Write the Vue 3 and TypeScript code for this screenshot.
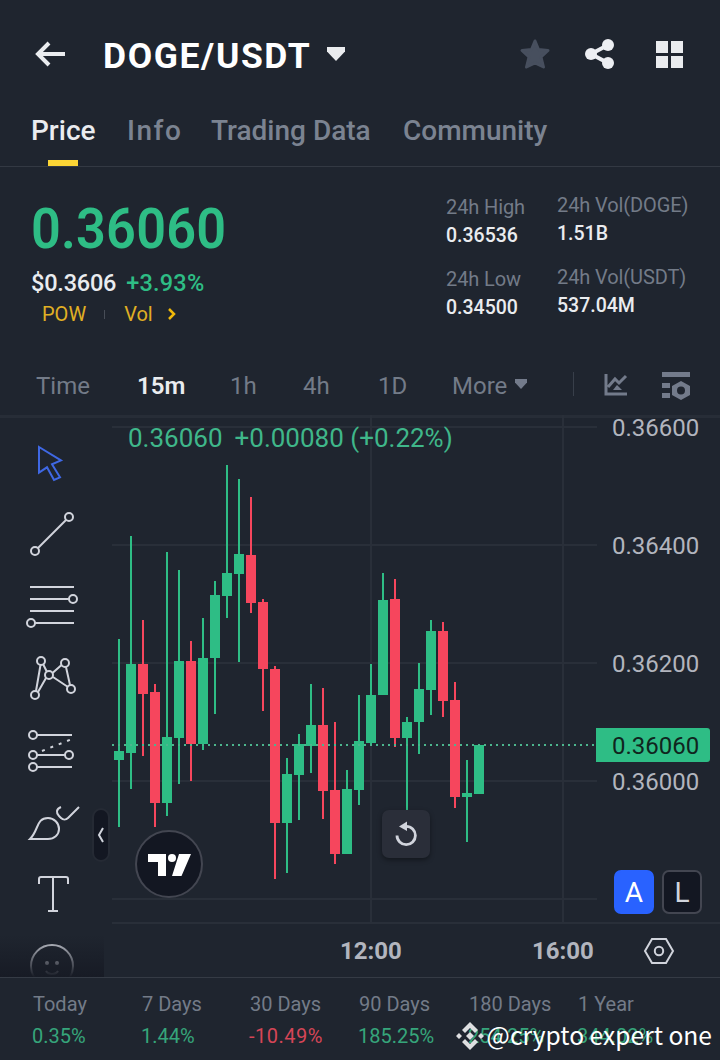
<script setup lang="ts">
import { ref } from 'vue'

interface Candle { up: boolean; high: number; top: number; bottom: number; low: number }
interface Change { label: string; value: string; down?: boolean }

const tabs = ['Price', 'Info', 'Trading Data', 'Community']
const activeTab = ref('Price')
const frames = ['Time', '15m', '1h', '4h', '1D']
const activeFrame = ref('15m')

const stats = [
  [{ label: '24h High', value: '0.36536' }, { label: '24h Low', value: '0.34500' }],
  [{ label: '24h Vol(DOGE)', value: '1.51B' }, { label: '24h Vol(USDT)', value: '537.04M' }],
]

const changes: Change[] = [
  { label: 'Today', value: '0.35%' },
  { label: '7 Days', value: '1.44%' },
  { label: '30 Days', value: '-10.49%', down: true },
  { label: '90 Days', value: '185.25%' },
  { label: '180 Days', value: '254.25%' },
  { label: '1 Year', value: '344.02%' },
]

const gridRows = [427, 545, 663, 781, 899]
const gridCols = [371, 563]
const c = (up: number, high: number, top: number, bottom: number, low: number): Candle =>
  ({ up: up === 1, high, top, bottom, low })

// Vertical extents of each 15-minute candle in chart units.
const candles: Candle[] = [
  c(1, 639, 751, 760, 827), c(1, 536, 664, 753, 789), c(0, 620, 664, 694, 756),
  c(0, 684, 692, 803, 827), c(1, 552, 737, 803, 816), c(1, 570, 661, 738, 784),
  c(0, 641, 661, 744, 781), c(1, 618, 658, 744, 750), c(1, 581, 595, 658, 714),
  c(1, 465, 573, 596, 618), c(1, 479, 554, 574, 662), c(0, 497, 555, 603, 613),
  c(0, 599, 602, 669, 711), c(0, 666, 669, 823, 879), c(1, 758, 774, 823, 873),
  c(1, 734, 744, 775, 820), c(1, 684, 725, 746, 773), c(0, 688, 725, 791, 819),
  c(0, 722, 790, 854, 864), c(1, 770, 789, 854, 854), c(1, 695, 741, 790, 805),
  c(1, 664, 695, 743, 745), c(1, 573, 600, 695, 695), c(0, 579, 599, 738, 747),
  c(1, 717, 722, 738, 811), c(1, 663, 689, 722, 754), c(1, 620, 631, 690, 715),
  c(0, 622, 631, 701, 717), c(0, 682, 700, 797, 808), c(1, 760, 793, 797, 842),
  c(1, 745, 745, 794, 794),
]
const cx = (i: number) => 119 + i * 12
</script>

<template>
  <main class="app">
    <header class="header">
      <svg class="back" width="32" height="28" viewBox="0 0 32 28"><path d="M31 14H4M15 3L4 14l11 11" /></svg>
      <h1>DOGE/USDT</h1>
      <svg class="caret" width="20" height="16" viewBox="0 0 20 16"><path d="M1 1h18v4.500L10 15 1 5.500z" /></svg>
      <div class="actions">
        <svg width="32" height="32" viewBox="0 0 32 32"><path fill="#474f5e" stroke="#474f5e" stroke-width="3" stroke-linejoin="round" d="M16 3l3.500 8.500 9.500 1-7 6.500 2.500 10L16 25l-8.500 4L10 19l-7-6.500 9.500-1z" /></svg>
        <svg width="32" height="32" viewBox="0 0 32 32"><path d="M25 7L8 16l17 9" fill="none" stroke="#eceef2" stroke-width="4" /><g fill="#eceef2"><circle cx="25" cy="7" r="6" /><circle cx="8" cy="16" r="6" /><circle cx="25" cy="25" r="6" /></g></svg>
        <svg width="32" height="32" viewBox="0 0 32 32"><path fill="#eaecef" d="M3 3h12v12H3zM18 3h12v12H18zM3 18h12v12H3zM18 18h12v12H18z" /></svg>
      </div>
    </header>

    <nav class="tabs">
      <button v-for="tab in tabs" :key="tab" :class="{ active: activeTab === tab }" @click="activeTab = tab">{{ tab }}</button>
    </nav>

    <section class="summary">
      <div class="quote">
        <div class="price">0.36060</div>
        <div class="fiat"><span>$0.3606</span><span class="gain">+3.93%</span></div>
        <div class="tags">
          <span>POW</span><i></i><span>Vol</span>
          <svg width="10" height="12" viewBox="0 0 10 12"><path d="M2 1l5 5-5 5" /></svg>
        </div>
      </div>
      <dl v-for="(column, n) in stats" :key="n" class="stats">
        <div v-for="item in column" :key="item.label"><dt>{{ item.label }}</dt><dd>{{ item.value }}</dd></div>
      </dl>
    </section>

    <nav class="frames">
      <button v-for="frame in frames" :key="frame" :class="{ active: activeFrame === frame }" @click="activeFrame = frame">{{ frame }}</button>
      <button class="more">More<svg width="14" height="12" viewBox="0 0 14 12"><path d="M1 1h12v3.500L7 11 1 4.500z" /></svg></button>
      <i class="divider"></i>
      <svg class="indicator" width="24" height="24" viewBox="0 0 24 24"><path d="M2 1v20h21M4 14l7-8 4 4 7-7" fill="none" stroke="#737b8b" stroke-width="3" /><path d="M9 17l4-5 5 5z" fill="#737b8b" /></svg>
      <svg width="30" height="30" viewBox="0 0 30 30"><path d="M1 1h28v5H1zM1 12h8v5H1zM1 22h8v5H1z" fill="#737b8b" /><path fill="#737b8b" fill-rule="evenodd" d="M20 10l9 5v9l-9 5-9-5v-9zM20 15.500a4 4 0 100 8 4 4 0 000-8z" /></svg>
    </nav>

    <section class="chart">
      <aside class="tools">
        <svg viewBox="0 0 104 72"><path stroke="#3f68e4" d="M39 20L61 33.300l-9 4L60 50.300 54 53 47 40.300l-8 5.400z" /></svg>
        <svg viewBox="0 0 104 72"><path d="M38 49L66 21" /><circle cx="69" cy="18" r="4" /><circle cx="35" cy="52" r="4" /></svg>
        <svg viewBox="0 0 104 72"><path d="M30 16h44M30 28h39M30 40h44M35 52h39" /><circle cx="73" cy="28" r="4" /><circle cx="31" cy="52" r="4" /></svg>
        <svg viewBox="0 0 104 72"><path d="M40.500 22L36 48M43 21l4 8M52.500 30l9-8M66 24l4 18M53 34l15 10M46 35L38 49" /><circle cx="41" cy="18" r="4" /><circle cx="65" cy="20" r="4" /><circle cx="49" cy="32" r="4" /><circle cx="71" cy="46" r="4" /><circle cx="35" cy="52" r="4" /></svg>
        <svg viewBox="0 0 104 72"><path d="M37 20h35M37 40h28M37 52h35" /><path d="M42 36l30-12" stroke-dasharray="3 6" /><circle cx="33" cy="20" r="4" /><circle cx="33" cy="40" r="4" /><circle cx="69" cy="40" r="4" /><circle cx="33" cy="52" r="4" /></svg>
        <svg viewBox="0 0 104 72"><path d="M30 52C39 43 36 31 48 31c6 0 11 5 11 11s-5 10-11 10zM61 20c-5 2-5 6-2 9l2 2c2 2 5 2 7 0L79 20" /></svg>
        <svg viewBox="0 0 104 72"><path d="M39 25v-5q0-2 2-2h25q2 0 2 2v5M53 18v34M48 52h10" /></svg>
        <svg viewBox="0 0 104 72"><circle cx="52" cy="35" r="21" /><path d="M46 40c2 4 10 4 12 0" /><circle class="eye" cx="47" cy="32" r="2" /><circle class="eye" cx="57" cy="32" r="2" /></svg>
      </aside>
      <div class="fade"></div>
      <svg class="plot" width="485" height="562" viewBox="112 415 485 562">
        <path v-for="y in gridRows" :key="y" class="grid" :d="`M112 ${y}H597`" />
        <path v-for="x in gridCols" :key="x" class="grid" :d="`M${x} 415V922`" />
        <g v-for="(k, i) in candles" :key="i" :class="k.up ? 'up' : 'down'">
          <rect :x="cx(i) - 1" :y="k.high" width="2" :height="k.low - k.high" />
          <rect :x="cx(i) - 5" :y="k.top" width="10" :height="k.bottom - k.top" />
        </g>
        <path class="last" d="M112 745H597" />
      </svg>
      <div class="legend"><span>0.36060</span><span>+0.00080 (+0.22%)</span></div>
      <ol class="axis"><li>0.36600</li><li>0.36400</li><li>0.36200</li><li>0.36000</li></ol>
      <div class="tag">0.36060</div>
      <div class="times"><span>12:00</span><span>16:00</span>
        <svg width="32" height="28" viewBox="0 0 32 28"><path d="M9 2h14l7 12-7 12H9L2 14z" /><circle cx="16" cy="14" r="4.200" /></svg>
      </div>
      <div class="scale"><button class="auto">A</button><button>L</button></div>
      <button class="collapse"><svg width="8" height="16" viewBox="0 0 8 16"><path d="M6 1L2 8l4 7" /></svg></button>
      <svg class="brand" width="68" height="68" viewBox="135 830 68 68"><circle cx="169" cy="864" r="33" fill="#131722" stroke="#434651" stroke-width="2" /><path fill="#fff" d="M148 854h18v22h-8v-14h-10zM179 854h12l-9.500 22H172z" /><circle cx="172" cy="858" r="4" fill="#fff" /></svg>
      <button class="reset"><svg width="26" height="28" viewBox="0 0 26 28"><path d="M4 15.500a9.200 9.200 0 1 0 9.200-9.200H12" fill="none" stroke="#d1d4dc" stroke-width="2.800" /><path d="M6 6.500L14 1.500v9.500z" fill="#d1d4dc" /></svg></button>
    </section>

    <footer class="changes">
      <div v-for="item in changes" :key="item.label"><span>{{ item.label }}</span><b :class="{ down: item.down }">{{ item.value }}</b></div>
      <div class="watermark">
        <svg width="28" height="28" viewBox="0 0 28 28"><path d="M14 0l8 8-3 3-5-5-5 5-3-3zM14 28l-8-8 3-3 5 5 5-5 3 3zM3 11l3 3-3 3-3-3zM25 11l3 3-3 3-3-3zM14 10l4 4-4 4-4-4z" /></svg>
        <span>@crypto expert one</span>
      </div>
    </footer>
  </main>
</template>

<style>
body { margin: 0; background: #1f252f; }
</style>

<style scoped>
* { box-sizing: border-box; }
.app { width: 720px; height: 1060px; overflow: hidden; background: #1f252f; color: #eaecef; font-family: Roboto, "Liberation Sans", sans-serif; }
svg { display: block; flex: none; }
button { padding: 0; border: 0; background: none; color: inherit; font: inherit; text-align: left; white-space: nowrap; }
.header { display: flex; align-items: center; height: 108px; padding: 0 35px 0 34px; }
.back { fill: none; stroke: #eaecef; stroke-width: 4; }
h1 { width: 223px; margin: 3px 0 0 37px; color: #fff; font-size: 35.500px; font-weight: 700; line-height: 40px; letter-spacing: 1.600px; }
.caret { fill: #eaecef; }
.actions { display: flex; margin-left: auto; }
.actions svg + svg { margin-left: 32px; }
.actions svg:last-child { margin-left: 38px; }
.tabs { display: grid; grid-template-columns: 96px 84px 192px 1fr; height: 59px; padding-left: 31px; border-bottom: 1px solid #333943; color: #7b8391; font-size: 28px; font-weight: 500; letter-spacing: .9px; }
.tabs button { position: relative; padding-bottom: 13px; }
.tabs button:nth-child(2) { letter-spacing: 1.500px; }
.tabs .active { color: #eaecef; }
.tabs .active::after { content: ""; position: absolute; left: 17px; bottom: 0; width: 30px; height: 6px; background: #fcd535; }
.summary { display: grid; grid-template-columns: 414px 112px 1fr; height: 189px; padding: 26px 0 0 32px; }
.price { height: 73px; margin-left: -1px; color: #2ebd85; font-size: 55px; font-weight: 600; line-height: 73px; letter-spacing: .2px; transform: scaleX(.95); transform-origin: left; }
.fiat { display: flex; gap: 10px; margin-left: -1px; font-size: 23.500px; font-weight: 500; line-height: 34px; letter-spacing: -.200px; }
.gain { color: #2ebd85; letter-spacing: .2px; }
.tags { display: flex; align-items: center; margin-left: 10px; color: #e0b024; font-size: 20px; line-height: 28px; }
.tags i { width: 1px; height: 9px; margin: 0 19px 0 18px; background: #474d57; }
.tags svg { margin-left: 14px; fill: none; stroke: #f0b90b; stroke-width: 2.500; }
.stats { margin: 0; font-size: 20px; }
.stats + .stats { margin: -2px 0 0 -1px; }
.stats > div { height: 72px; }
.stats dt { color: #737b88; line-height: 28px; letter-spacing: -.1px; }
.stats dd { margin: 0; font-size: 19.500px; font-weight: 500; line-height: 30px; }
.frames { display: grid; grid-template-columns: 101px 93px 73px 75px 74px 121px 31px 57px 1fr; align-items: center; height: 59px; padding-left: 36px; color: #737b88; font-size: 24px; }
.frames .active { color: #eaecef; font-weight: 600; }
.more { display: flex; align-items: center; gap: 7px; }
.more svg { margin-top: -3px; fill: #737b8b; }
.indicator { margin-top: -2px; }
.divider { width: 1px; height: 24px; margin-top: -3px; background: #383f4a; }
.chart { position: relative; height: 562px; border-top: 3px solid #272d37; }
.tools { display: flex; flex-direction: column; width: 104px; height: 559px; padding-top: 9px; overflow: hidden; }
.tools svg { width: 104px; height: 72px; fill: none; stroke: #d1d4dc; stroke-width: 2; }
.tools .eye { fill: #d1d4dc; stroke: none; }
.fade { position: absolute; left: 0; bottom: 0; width: 104px; height: 42px; background: linear-gradient(#171b2500, #171b25); }
.plot { position: absolute; left: 112px; top: -3px; }
.grid { stroke: #292f39; stroke-width: 2; }
.up { fill: #2ebd85; }
.down { fill: #f6465d; }
.last { stroke: #4cb68e; stroke-width: 2; stroke-dasharray: 2 4; }
.legend { position: absolute; left: 128px; top: 5px; display: flex; gap: 12px; color: #3fb78a; font-size: 26px; line-height: 30px; }
.axis { position: absolute; left: 612px; top: -20px; margin: 0; padding: 0; list-style: none; color: #b2b5be; font-size: 24px; }
.axis li { height: 118px; line-height: 60px; }
.tag { position: absolute; left: 596px; top: 310px; width: 114px; height: 34px; padding-left: 16px; border-radius: 0 3px 3px 0; background: #2ebd85; color: #10251e; font-size: 24px; line-height: 36px; }
.times { position: absolute; left: 0; right: 0; top: 504px; display: grid; grid-template-columns: 192px 111px 1fr; align-items: center; height: 56px; padding: 2px 0 0 340px; color: #b2b5be; font-size: 24px; font-weight: 700; }
.times::before { content: ""; position: absolute; left: 112px; right: 0; top: 0; height: 2px; background: #292f39; }
.times svg { fill: none; stroke: #d1d4dc; stroke-width: 2; }
.scale { position: absolute; left: 614px; top: 452px; display: flex; gap: 8px; }
.scale button { width: 40px; height: 44px; border: 2px solid #434651; border-radius: 7px; background: #131722; color: #d1d4dc; font-size: 28px; text-align: center; }
.scale .auto { border-color: #2962ff; background: #2962ff; color: #fff; }
.collapse { position: absolute; left: 92px; top: 390px; display: grid; place-items: center; width: 18px; height: 54px; border: 2px solid #252a34; border-radius: 9px; background: #131722; }
.collapse svg { fill: none; stroke: #d1d4dc; stroke-width: 2; }
.brand { position: absolute; left: 135px; top: 412px; }
.reset { position: absolute; left: 382px; top: 392px; display: grid; place-items: center; width: 48px; height: 48px; border-radius: 7px; background: #2a2e39; box-shadow: 0 2px 5px #0006; }
.changes { position: relative; display: grid; grid-template-columns: 109px 108px 109px 110px 109px 1fr; height: 83px; padding: 12px 0 0 33px; border-top: 1px solid #353b45; color: #737b88; font-size: 20px; }
.changes span, .changes b { display: block; height: 32px; line-height: 28px; font-weight: 400; white-space: nowrap; }
.changes b { margin-left: -1px; color: #36a57b; }
.changes b.down { color: #d64557; letter-spacing: .5px; }
.watermark { position: absolute; right: 8px; top: 42px; display: flex; align-items: center; gap: 3px; color: #fff; font-family: "Noto Sans CJK SC", "Noto Sans", sans-serif; font-size: 24.600px; }
.watermark svg { fill: #dedfe1; }
</style>
